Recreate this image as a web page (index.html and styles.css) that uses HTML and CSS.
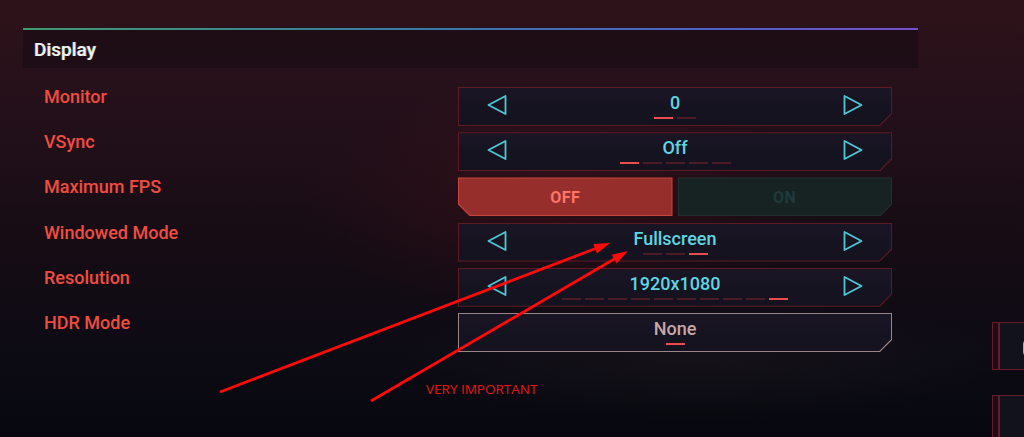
FILE: index.html
```html
<!DOCTYPE html>
<html>
<head>
  <title>Display Settings</title>
  <link rel="stylesheet" href="styles.css">
</head>
<body>
  <div class="screen">
    <div class="panel">
      <div class="head">Display</div>
      <div class="rows">
        <div class="label">Monitor</div>
        <div class="sel">
          <svg class="arw" width="20" height="20" viewBox="0 0 20 20"><polygon points="18.5,1 1.5,10 18.5,19" /></svg>
          <div class="val">
            <span class="txt">0</span>
            <div class="dots"><i class="on"></i><i></i></div>
          </div>
          <svg class="arw" width="20" height="20" viewBox="0 0 20 20"><polygon points="1.5,1 18.5,10 1.5,19" /></svg>
        </div>

        <div class="label">VSync</div>
        <div class="sel">
          <svg class="arw" width="20" height="20" viewBox="0 0 20 20"><polygon points="18.5,1 1.5,10 18.5,19" /></svg>
          <div class="val">
            <span class="txt">Off</span>
            <div class="dots"><i class="on"></i><i></i><i></i><i></i><i></i></div>
          </div>
          <svg class="arw" width="20" height="20" viewBox="0 0 20 20"><polygon points="1.5,1 18.5,10 1.5,19" /></svg>
        </div>

        <div class="label">Maximum FPS</div>
        <div class="toggle">
          <div class="opt off"><span>OFF</span></div>
          <div class="opt on"><span>ON</span></div>
        </div>

        <div class="label">Windowed Mode</div>
        <div class="sel">
          <svg class="arw" width="20" height="20" viewBox="0 0 20 20"><polygon points="18.5,1 1.5,10 18.5,19" /></svg>
          <div class="val">
            <span class="txt">Fullscreen</span>
            <div class="dots"><i></i><i></i><i class="on"></i></div>
          </div>
          <svg class="arw" width="20" height="20" viewBox="0 0 20 20"><polygon points="1.5,1 18.5,10 1.5,19" /></svg>
        </div>

        <div class="label">Resolution</div>
        <div class="sel">
          <svg class="arw" width="20" height="20" viewBox="0 0 20 20"><polygon points="18.5,1 1.5,10 18.5,19" /></svg>
          <div class="val">
            <span class="txt">1920x1080</span>
            <div class="dots"><i></i><i></i><i></i><i></i><i></i><i></i><i></i><i></i><i></i><i class="on"></i></div>
          </div>
          <svg class="arw" width="20" height="20" viewBox="0 0 20 20"><polygon points="1.5,1 18.5,10 1.5,19" /></svg>
        </div>

        <div class="label">HDR Mode</div>
        <div class="sel plain">
          <div class="val">
            <span class="txt">None</span>
            <div class="dots"><i class="on"></i></div>
          </div>
        </div>
      </div>
    </div>

    <div class="side">
      <div class="tab"><span class="peek"></span></div>
      <div class="tab"></div>
    </div>

    <!-- annotation drawn over the screenshot -->
    <svg class="marks" width="1024" height="437" viewBox="0 0 1024 437">
      <line x1="220" y1="392" x2="597" y2="248" />
      <polygon points="610,243 596.9,253.4 593.3,244" />
      <line x1="371" y1="401" x2="616" y2="258" />
      <polygon points="628,251 616.7,263.4 611.7,254.8" />
    </svg>
    <div class="note">VERY IMPORTANT</div>
  </div>
</body>
</html>
```

FILE: styles.css
```css
body {
  margin: 0;
  font-family: Roboto, "Noto Sans", sans-serif;
  background: #0b0a12;
}
.screen {
  position: relative;
  width: 1024px;
  height: 437px;
  overflow: hidden;
  display: flex;
  align-items: flex-start;
  background:
    radial-gradient(ellipse 260px 120px at 560px 200px, rgba(120, 20, 30, 0.22), transparent),
    radial-gradient(ellipse 300px 60px at 700px 360px, rgba(60, 50, 50, 0.18), transparent),
    linear-gradient(180deg, #2e1219 0%, #24101a 25%, #160c14 55%, #0d0b14 80%, #07080f 100%);
}
.panel {
  flex-shrink: 0;
  margin: 28px 0 0 23px;
  width: 895px;
}
.head {
  height: 38px;
  border-top: 2px solid #3d7f8a;
  border-image: linear-gradient(90deg, #3f9a70, #3a78a8 45%, #5060c8 80%, #7650c8) 1;
  background: rgba(10, 6, 14, 0.35);
  color: #eef2f4;
  font-size: 19px;
  font-weight: 500;
  line-height: 40px;
  padding-left: 11px;
  text-shadow: -0.6px 0 rgba(80, 200, 255, 0.6), 0.6px 0 rgba(255, 190, 80, 0.5);
}
.rows {
  display: grid;
  grid-template-columns: 435px 434px;
  grid-auto-rows: 39px;
  row-gap: 6.2px;
  padding-top: 19px;
}
.label {
  padding-left: 21px;
  color: #f24c40;
  font-size: 18px;
  font-weight: 500;
  line-height: 20px;
}
.sel {
  position: relative;
  display: flex;
  align-items: flex-start;
  justify-content: space-between;
  padding: 0 29px;
  background: #5c1a22;
  clip-path: polygon(0 0, 100% 0, 100% calc(100% - 12px), calc(100% - 12px) 100%, 0 100%);
}
.sel::before {
  content: '';
  position: absolute;
  inset: 1px;
  background: linear-gradient(180deg, #1a1524, #13121e);
  clip-path: polygon(0 0, 100% 0, 100% calc(100% - 11.6px), calc(100% - 11.6px) 100%, 0 100%);
}
.sel > * {
  position: relative;
}
.arw {
  margin-top: 8px;
}
.arw polygon {
  fill: none;
  stroke: #4fc6d6;
  stroke-width: 1.8;
  stroke-linejoin: round;
}
.val {
  flex: 1;
  display: flex;
  flex-direction: column;
  align-items: center;
}
.txt {
  margin-top: 6px;
  color: #5fd6e2;
  font-size: 18px;
  font-weight: 500;
  line-height: 20px;
}
.dots {
  display: flex;
  gap: 4px;
  margin-top: 4px;
}
.dots i {
  width: 19px;
  height: 2px;
  background: #4c1c24;
}
.dots i.on {
  background: #ea4d4b;
}
.sel.plain {
  justify-content: center;
  background: #9c8486;
}
.sel.plain .txt {
  color: #c9a6a8;
}
.toggle {
  display: flex;
  gap: 5px;
}
.opt {
  position: relative;
  flex: 1;
  display: flex;
  align-items: center;
  justify-content: center;
  font-size: 16px;
  font-weight: 700;
  letter-spacing: 0.5px;
}
.opt::before {
  content: '';
  position: absolute;
  inset: 1px;
}
.opt span {
  position: relative;
  margin-top: 2px;
}
.opt.off {
  background: #c9443c;
  color: #ff7466;
  clip-path: polygon(0 0, 100% 0, 100% 100%, 12px 100%, 0 calc(100% - 12px));
}
.opt.off::before {
  background: #962f2c;
  clip-path: polygon(0 0, 100% 0, 100% 100%, 11.6px 100%, 0 calc(100% - 11.6px));
}
.opt.on {
  background: #24302f;
  color: #1e3a3a;
  clip-path: polygon(0 0, 100% 0, 100% calc(100% - 12px), calc(100% - 12px) 100%, 0 100%);
}
.opt.on::before {
  background: #172222;
  clip-path: polygon(0 0, 100% 0, 100% calc(100% - 11.6px), calc(100% - 11.6px) 100%, 0 100%);
}
.side {
  flex-shrink: 0;
  margin: 322px 0 0 74px;
  display: flex;
  flex-direction: column;
  gap: 25px;
}
.tab {
  width: 32px;
  height: 48px;
  border: 1px solid #6a1c26;
  border-right: none;
  background: #12121d;
  box-shadow: inset 5px 0 0 #1a0f18, inset 7px 0 0 #6a1c26;
  padding: 18px 0 0 30px;
  box-sizing: border-box;
}
.peek {
  display: block;
  width: 4px;
  height: 14px;
  border: 2px solid #4fd6d6;
  border-right: none;
  border-radius: 3px 0 0 3px;
  box-sizing: border-box;
}
.marks {
  position: absolute;
  left: 0;
  top: 0;
  pointer-events: none;
}
.marks line {
  stroke: #ff0a0a;
  stroke-width: 2.8;
}
.marks polygon {
  fill: #ff0a0a;
}
.note {
  position: absolute;
  left: 426px;
  top: 381px;
  color: #e81414;
  font-family: "Open Sans", sans-serif;
  font-size: 13.5px;
  line-height: 16px;
}
```
